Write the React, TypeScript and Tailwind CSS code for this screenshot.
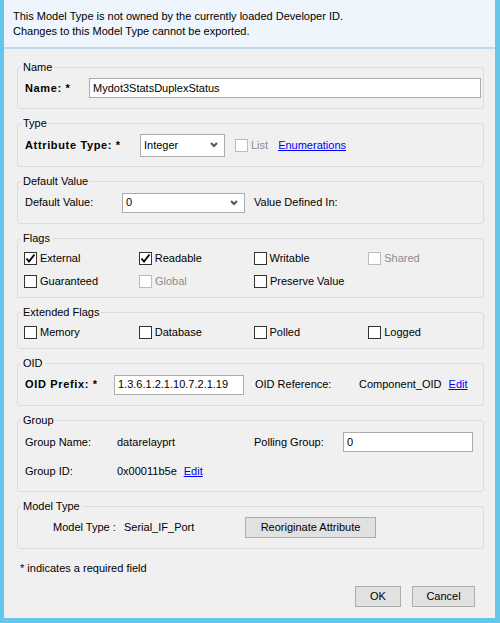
import React from 'react';

const font = { fontFamily: '"Liberation Sans", Arial, sans-serif' };

function Box({ title, className, children }: { title: string; className: string; children: React.ReactNode }) {
    return (
        <div className={`relative ml-[13px] w-[467px] border border-[#dcdcdc] rounded-[3px] ${className}`}>
            <span className="absolute left-[3px] -top-[7px] bg-[#f0f0f0] px-[2px] leading-[13px]">{title}</span>
            {children}
        </div>
    );
}

function Check({ label, checked, disabled }: { label: string; checked?: boolean; disabled?: boolean }) {
    return (
        <div className="w-[115px] h-[13px] flex items-center">
            <span
                className={`w-[13px] h-[13px] border bg-white flex items-center justify-center ${disabled ? 'border-[#bcbcbc]' : 'border-[#333333]'}`}
            >
                {checked && (
                    <svg width="11" height="11" viewBox="0 0 11 11">
                        <path d="M1.5 5.5 L4 8.5 L9.5 1.5" fill="none" stroke="#000" strokeWidth="1.8" />
                    </svg>
                )}
            </span>
            <span className={`ml-[3px] leading-[13px] ${disabled ? 'text-[#8d8d8d]' : ''}`}>{label}</span>
        </div>
    );
}

function Select({ value, className }: { value: string; className: string }) {
    return (
        <div className={`bg-white border border-[#acacac] flex items-center pl-[3px] pr-[6px] ${className}`}>
            <span className="flex-1">{value}</span>
            <svg width="8" height="6" viewBox="0 0 8 6">
                <path d="M1 1 L4 4 L7 1" fill="none" stroke="#555" strokeWidth="2" />
            </svg>
        </div>
    );
}

function Input({ value, className }: { value: string; className: string }) {
    return (
        <div className={`bg-white border border-[#acacac] flex items-center pl-[3px] ${className}`}>
            {value}
        </div>
    );
}

function Btn({ label, className }: { label: string; className: string }) {
    return (
        <div className={`bg-[#e1e1e1] border border-[#adadad] flex items-center justify-center ${className}`}>
            {label}
        </div>
    );
}

const link = 'text-[#0000ff] underline';
const bold = 'font-bold tracking-[0.65px]';

export default function App() {
    return (
        <div
            className="w-[500px] h-[623px] bg-[#65c6ec] pl-[4px] pr-[5px] pb-[5px] flex flex-col text-[11px] text-black"
            style={font}
        >
            <div className="flex-1 bg-[#f0f0f0] flex flex-col">
                {/* Banner */}
                <div className="h-[49px] bg-[#eef5fd] border-b-2 border-[#c3d9ef] pl-[9px] pt-[9px] leading-[15px]">
                    <div>This Model Type is not owned by the currently loaded Developer ID.</div>
                    <div>Changes to this Model Type cannot be exported.</div>
                </div>

                <div className="flex flex-col gap-[14px] mt-[18px]">
                    <Box title="Name" className="h-[42px] flex items-center pl-[7px]">
                        <span className={`w-[64px] ${bold}`}>Name: *</span>
                        <Input value="Mydot3StatsDuplexStatus" className="w-[392px] h-[20px]" />
                    </Box>

                    <Box title="Type" className="h-[44px] flex items-center pl-[7px]">
                        <span className={`w-[115px] ${bold}`}>Attribute Type: *</span>
                        <Select value="Integer" className="w-[85px] h-[23px]" />
                        <span className="ml-[10px] w-[13px] h-[13px] border border-[#bcbcbc] bg-white" />
                        <span className="ml-[3px] text-[#8d8d8d]">List</span>
                        <span className={`ml-[10px] ${link}`}>Enumerations</span>
                    </Box>

                    <Box title="Default Value" className="h-[43px] flex items-center pl-[7px]">
                        <span className="w-[97px]">Default Value:</span>
                        <Select value="0" className="w-[123px] h-[20px]" />
                        <span className="ml-[9px]">Value Defined In:</span>
                    </Box>

                    <Box title="Flags" className="h-[60px] pl-[6px] pt-[13px] flex flex-col gap-[10px]">
                        <div className="flex">
                            <Check label="External" checked />
                            <Check label="Readable" checked />
                            <Check label="Writable" />
                            <Check label="Shared" disabled />
                        </div>
                        <div className="flex">
                            <Check label="Guaranteed" />
                            <Check label="Global" disabled />
                            <Check label="Preserve Value" />
                        </div>
                    </Box>

                    <Box title="Extended Flags" className="h-[37px] pl-[6px] pt-[13px]">
                        <div className="flex">
                            <Check label="Memory" />
                            <Check label="Database" />
                            <Check label="Polled" />
                            <Check label="Logged" />
                        </div>
                    </Box>

                    <Box title="OID" className="h-[43px] flex items-center pl-[7px]">
                        <span className={`w-[89px] ${bold}`}>OID Prefix: *</span>
                        <Input value="1.3.6.1.2.1.10.7.2.1.19" className="w-[130px] h-[20px]" />
                        <span className="ml-[11px] w-[104px]">OID Reference:</span>
                        <span>Component_OID</span>
                        <span className={`ml-[7px] ${link}`}>Edit</span>
                    </Box>

                    <Box title="Group" className="h-[72px] pl-[7px] pt-[11px] flex flex-col gap-[9px]">
                        <div className="flex items-center h-[20px]">
                            <span className="w-[92px]">Group Name:</span>
                            <span className="w-[137px]">datarelayprt</span>
                            <span className="w-[89px]">Polling Group:</span>
                            <Input value="0" className="w-[130px] h-[20px]" />
                        </div>
                        <div className="flex items-center h-[20px]">
                            <span className="w-[92px]">Group ID:</span>
                            <span>0x00011b5e</span>
                            <span className={`ml-[7px] ${link}`}>Edit</span>
                        </div>
                    </Box>

                    <Box title="Model Type" className="h-[43px] flex items-center pl-[35px]">
                        <span className="w-[71px]">Model Type :</span>
                        <span className="w-[121px]">Serial_IF_Port</span>
                        <Btn label="Reoriginate Attribute" className="w-[131px] h-[21px]" />
                    </Box>
                </div>

                <div className="ml-[16px] mt-[13px] leading-[13px]">* indicates a required field</div>

                <div className="flex justify-end gap-[11px] mr-[20px] mt-[11px]">
                    <Btn label="OK" className="w-[46px] h-[21px]" />
                    <Btn label="Cancel" className="w-[63px] h-[21px]" />
                </div>
            </div>
        </div>
    );
}
